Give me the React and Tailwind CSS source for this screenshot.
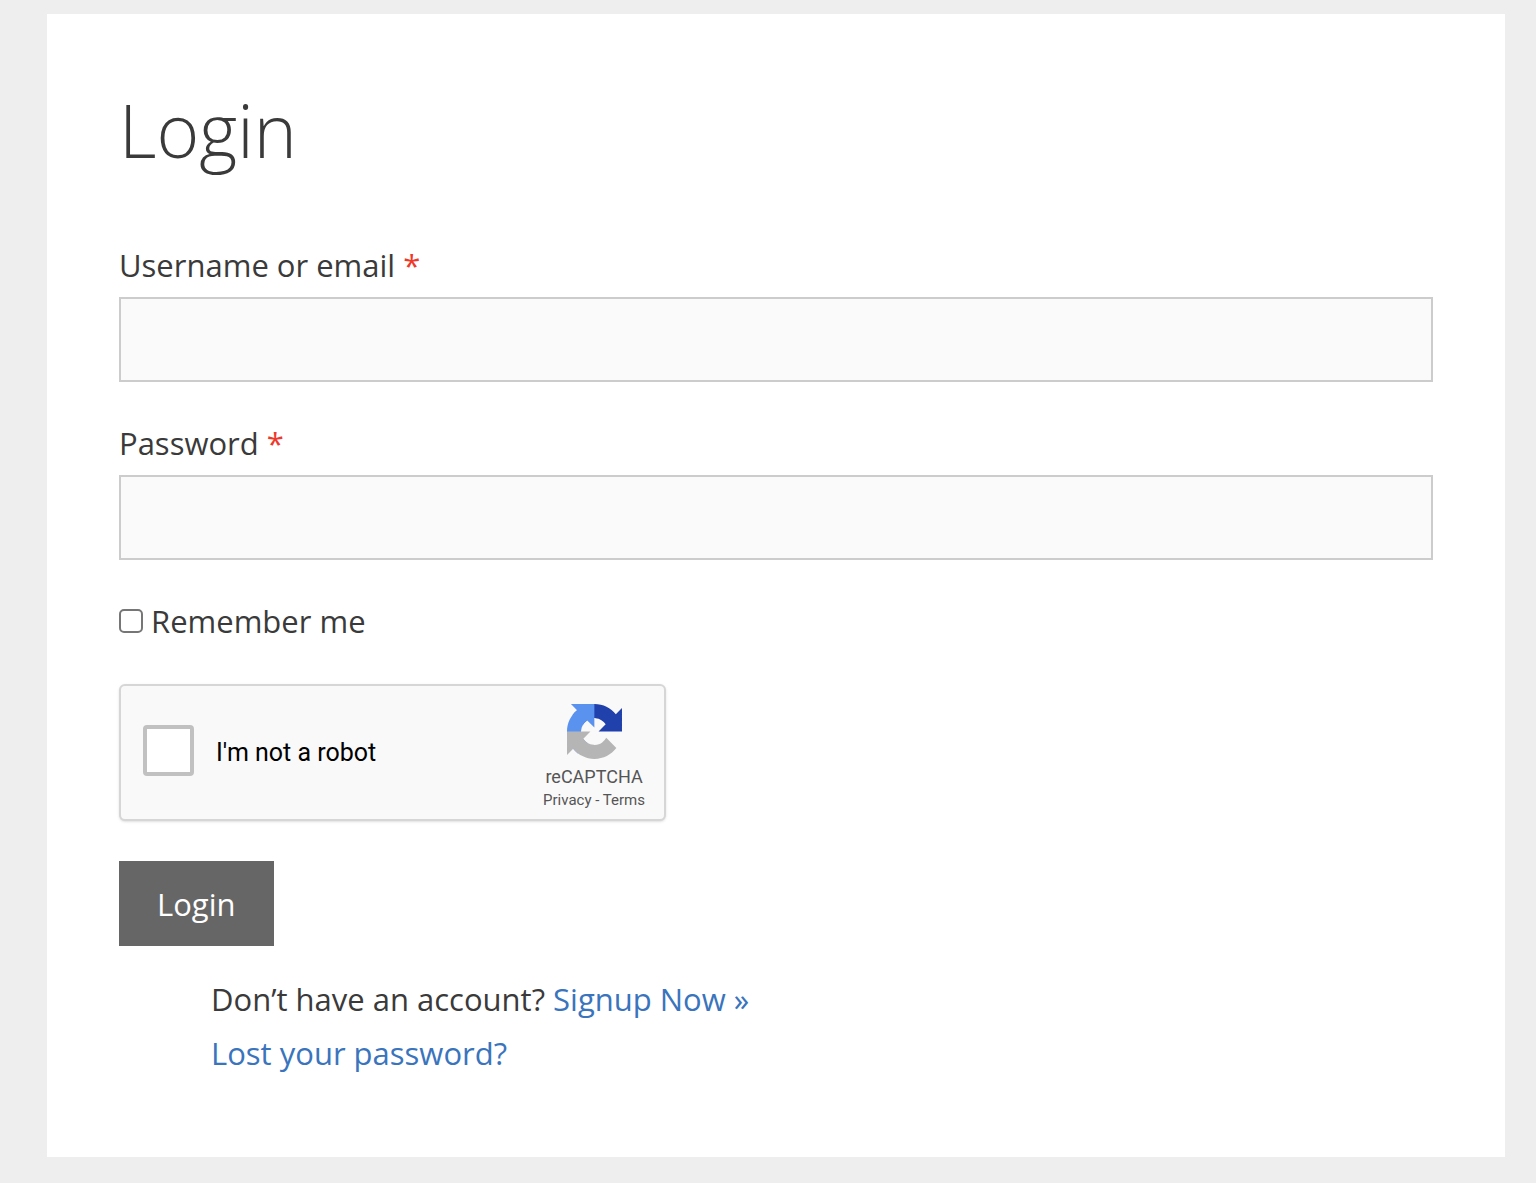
function RecaptchaLogo() {
  return (
    <svg viewBox="0 0 64 64" className="size-[55px]" aria-hidden="true">
      <path
        fill="#2040ab"
        d="M64 31.955l-.033-1.37V4.687l-7.16 7.16C50.948 4.674 42.033.093 32.05.093c-10.4 0-19.622 4.96-25.458 12.64l11.736 11.86a15.55 15.55 0 0 1 4.754-5.334c2.05-1.6 4.952-2.906 8.968-2.906.485 0 .86.057 1.135.163 4.976.393 9.288 3.14 11.828 7.124l-8.307 8.307L64 31.953"
      />
      <path
        fill="#5a92ef"
        d="M31.862.094l-1.37.033H4.594l7.16 7.16C4.58 13.147 0 22.06 0 32.046c0 10.4 4.96 19.622 12.64 25.458L24.5 45.768a15.55 15.55 0 0 1-5.334-4.754c-1.6-2.05-2.906-4.952-2.906-8.968 0-.485.057-.86.163-1.135.393-4.976 3.14-9.288 7.124-11.828l8.307 8.307L31.86.095"
      />
      <path
        fill="#b5b5b5"
        d="M.001 32.045l.033 1.37v25.898l7.16-7.16c5.86 7.173 14.774 11.754 24.76 11.754 10.4 0 19.622-4.96 25.458-12.64l-11.736-11.86a15.55 15.55 0 0 1-4.754 5.334c-2.05 1.6-4.952 2.906-8.968 2.906-.485 0-.86-.057-1.135-.163-4.976-.393-9.288-3.14-11.828-7.124l8.307-8.307c-10.522.04-22.4.066-27.295-.005"
      />
    </svg>
  )
}

function Field({ id, label, type = 'text' }) {
  return (
    <div className="mb-[34px]">
      <label htmlFor={id} className="block mb-[5px]">
        {label} <span className="font-medium text-[#f0382a]">*</span>
      </label>
      <input
        id={id}
        type={type}
        className="block w-full h-[85px] px-7 bg-[#fafafa] border-2 border-[#cccccc] outline-none"
      />
    </div>
  )
}

function Recaptcha() {
  return (
    <div className="flex items-center justify-between w-[547px] max-w-full h-[137px] pl-[22px] pr-[19px] bg-[#f9f9f9] border-2 border-[#d6d6d6] rounded-md shadow-sm font-['Roboto',sans-serif]">
      <div className="flex items-center gap-[22px] pb-1">
        <input
          id="robot"
          type="checkbox"
          className="appearance-none size-[51px] bg-white border-4 border-[#c1c1c1] rounded-sm"
        />
        <label htmlFor="robot" className="pt-1 text-[25px] leading-8 text-black">
          I'm not a robot
        </label>
      </div>

      <div className="flex flex-col items-center pt-2 text-[#555555]">
        <RecaptchaLogo />
        <div className="mt-[5px] text-lg leading-[26px]">reCAPTCHA</div>
        <div className="text-[15px] leading-5">
          <a href="#privacy">Privacy</a>
          <span> - </span>
          <a href="#terms">Terms</a>
        </div>
      </div>
    </div>
  )
}

export default function App() {
  return (
    <div className="min-h-screen pt-[14px] pb-[26px] pl-[47px] pr-[31px] bg-[#eeeeee] font-['Open_Sans',sans-serif] text-[31px] leading-[54px] text-[#3a3a3a]">
      <main className="px-[72px] pt-[72px] pb-[77px] bg-white">
        <h1 className="mb-[65px] text-[73px] leading-[87px] font-light">Login</h1>

        <form onSubmit={(e) => e.preventDefault()}>
          <Field id="username" label="Username or email" />
          <Field id="password" label="Password" type="password" />

          {/* Remember me */}
          <div className="flex items-center gap-2 mb-9">
            <input
              id="remember"
              type="checkbox"
              className="appearance-none size-6 bg-white border-2 border-[#767676] rounded-[5px]"
            />
            <label htmlFor="remember">Remember me</label>
          </div>

          <Recaptcha />

          <button type="submit" className="block h-[85px] mt-10 px-[38px] bg-[#666666] text-white">
            Login
          </button>
        </form>

        {/* Links */}
        <ul className="mt-[26px] ml-[92px]">
          <li>
            Don’t have an account?{' '}
            <a href="#signup" className="text-[#3a74bd]">Signup Now »</a>
          </li>
          <li>
            <a href="#lost-password" className="text-[#3a74bd]">Lost your password?</a>
          </li>
        </ul>
      </main>
    </div>
  )
}
